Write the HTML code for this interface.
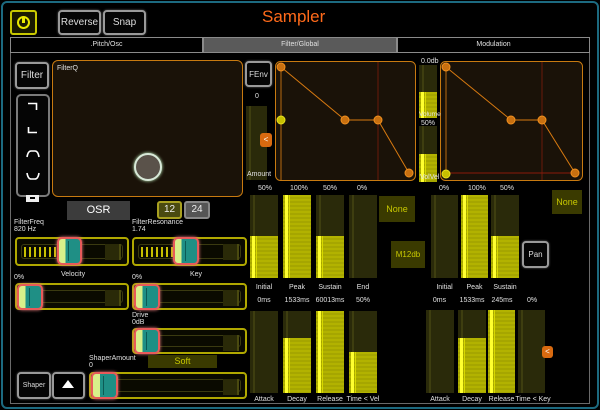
<!DOCTYPE html>
<html><head><meta charset="utf-8"><style>
*{box-sizing:border-box;margin:0;padding:0}
body{width:600px;height:410px;background:#000;position:relative;overflow:hidden;font-family:"Liberation Sans",sans-serif;color:#ddd}
div,span{position:absolute}
.t{font-size:7px;color:#e0e0e0;white-space:nowrap}
.c{text-align:center}
.btn{border:2px solid #9a9a9a;border-radius:4px;background:#050505;color:#ddd;display:flex;align-items:center;justify-content:center;box-shadow:0 0 2px #666}
.bar{background:#2a2a0a;overflow:hidden}
.bar::before{content:"";position:absolute;left:3px;top:0;bottom:0;width:2px;background:#3e3e10}
.fill{left:0;right:0;bottom:0;background:repeating-linear-gradient(#b2b200 0 2px,#a6a600 2px 4px)}
.fill::before{content:"";position:absolute;left:2px;top:0;bottom:0;width:3px;background:#ffff30}
.fill::after{content:"";position:absolute;left:6px;top:0;bottom:0;width:1px;background:#d8d800}
.sl{border:2px solid #b0a800;border-radius:4px;background:#0a0a00}
.sl .tr{left:4px;right:4px;top:5px;bottom:5px;border:1px solid #3a3a10;border-radius:3px}
.sl .ar{right:6px;top:5px;width:16px;height:16px;background:#2a2a08;border-right:2px solid #4a4a10}
.hd{border:2px solid #e85a5a;border-radius:5px;background:linear-gradient(90deg,#d8f08a 0 30%,#1f8f85 30% 100%);box-shadow:0 0 3px #f08080}
.hd::after{content:"";position:absolute;left:45%;top:2px;bottom:2px;width:1px;background:#0c5a55}
.ticks{background:repeating-linear-gradient(90deg,#c8c000 0 2px,transparent 2px 5px);top:8px;height:10px}
</style></head><body>
<div style="left:1px;top:1px;width:598px;height:408px;border:2px solid #1c6a80;border-radius:6px"></div>
<div style="left:10px;top:52px;width:580px;height:352px;border:1px solid #6a6a6a;border-top:none"></div>
<div style="left:10px;top:10px;width:27px;height:25px;border:2px solid #c8c800;border-radius:3px;background:#1a1a00"></div>
<div style="left:17px;top:16px;width:13px;height:13px;border:2px solid #e8e800;border-radius:50%"></div>
<div style="left:22px;top:17px;width:3px;height:6px;background:#e8e800"></div>
<div class="btn" style="left:58px;top:10px;width:43px;height:25px;font-size:10px">Reverse</div>
<div class="btn" style="left:103px;top:10px;width:43px;height:25px;font-size:10px">Snap</div>
<div style="left:262px;top:7px;font-size:17px;color:#ff6a1a">Sampler</div>
<div class="t c" style="left:10px;top:37px;width:193px;height:16px;border:1px solid #8a8a8a;line-height:14px;background:#000">.Pitch/Osc</div>
<div class="t c" style="left:203px;top:37px;width:194px;height:16px;border:1px solid #8a8a8a;line-height:14px;background:#5a5a5a">Filter/Global</div>
<div class="t c" style="left:397px;top:37px;width:193px;height:16px;border:1px solid #8a8a8a;line-height:14px;background:#000">Modulation</div>
<div class="btn" style="left:15px;top:62px;width:34px;height:27px;font-size:10px">Filter</div>
<div style="left:16px;top:94px;width:34px;height:103px;border:2px solid #7a7a7a;border-radius:5px;background:#050505"></div>
<div style="left:52px;top:60px;width:191px;height:137px;border:1px solid #c87a10;border-radius:6px;background:#1a1208"></div>
<div class="t" style="left:57px;top:65px">FilterQ</div>
<div style="left:134px;top:153px;width:28px;height:28px;border:2px solid #d8e8d8;border-radius:50%;background:#5a524a;box-shadow:0 0 3px #cfc"></div>
<div class="btn" style="left:245px;top:61px;width:27px;height:26px;font-size:8px">FEnv</div>
<div class="t" style="left:255px;top:93px">0</div>
<div class="bar" style="left:246px;top:106px;width:21px;height:74px"></div>
<div class="t" style="left:247px;top:171px">Amount</div>
<div style="left:260px;top:133px;width:12px;height:14px;background:#d86a10;border-radius:3px;color:#fff;font-size:8px;text-align:center;line-height:14px">&lt;</div>
<svg style="position:absolute;left:0;top:0" width="600" height="410">
<g fill="none" stroke="#fff" stroke-width="1.6">
<path d="M28 103.5H36.5V110"/>
<path d="M28.5 127V132.5H37"/>
<path d="M27 157Q28 151 31 151H35Q38 151 39 157"/>
<path d="M27 173Q28 179 31 179H35Q38 179 39 173"/>
</g>
<rect x="26" y="195" width="13" height="7" fill="#eee"/>
<rect x="30" y="197" width="5" height="2" fill="#000"/>
<rect x="275.5" y="61.5" width="140" height="119" rx="5" fill="#1a1208" stroke="#c87a10"/>
<line x1="281" y1="67" x2="281" y2="180" stroke="#b86a10"/>
<line x1="378" y1="62" x2="378" y2="180" stroke="#6a1a0a"/>
<polyline points="281,67 345,120 378,120 409,173" fill="none" stroke="#d87a10"/>
<g fill="#c87010" stroke="#f09020"><circle cx="281" cy="67" r="4"/><circle cx="345" cy="120" r="4"/><circle cx="378" cy="120" r="4"/><circle cx="409" cy="173" r="4"/></g>
<circle cx="281" cy="120" r="4" fill="#c8c000" stroke="#e8e020"/>
<rect x="440.5" y="61.5" width="142" height="119" rx="5" fill="#1a1208" stroke="#c87a10"/>
<line x1="446" y1="67" x2="446" y2="174" stroke="#b86a10"/>
<line x1="542" y1="62" x2="542" y2="180" stroke="#6a1a0a"/>
<line x1="446" y1="173" x2="578" y2="173" stroke="#8a1a0a"/>
<polyline points="446,67 511,120 542,120 575,173" fill="none" stroke="#d87a10"/>
<g fill="#c87010" stroke="#f09020"><circle cx="446" cy="67" r="4"/><circle cx="511" cy="120" r="4"/><circle cx="542" cy="120" r="4"/><circle cx="575" cy="173" r="4"/></g>
<circle cx="446" cy="174" r="4" fill="#c8c000" stroke="#e8e020"/>
<polygon points="62,388 74,388 68,380" fill="#fff"/>
</svg>
<div class="t" style="left:421px;top:58px">0.0db</div>
<div class="bar" style="left:419px;top:65px;width:18px;height:53px"><div class="fill" style="height:26px"></div></div>
<div class="t" style="left:419px;top:111px;font-size:6.5px">Volume</div>
<div class="t" style="left:421px;top:120px">50%</div>
<div class="bar" style="left:419px;top:126px;width:18px;height:56px"><div class="fill" style="height:28px"></div></div>
<div class="t" style="left:420px;top:174px">VolVel</div>
<div class="t" style="left:258px;top:185px">50%</div>
<div class="t" style="left:290px;top:185px">100%</div>
<div class="t" style="left:323px;top:185px">50%</div>
<div class="t" style="left:357px;top:185px">0%</div>
<div class="t" style="left:439px;top:185px">0%</div>
<div class="t" style="left:468px;top:185px">100%</div>
<div class="t" style="left:500px;top:185px">50%</div>
<div class="bar" style="left:250px;top:195px;width:28px;height:83px"><div class="fill" style="height:42px"></div></div>
<div class="bar" style="left:283px;top:195px;width:28px;height:83px"><div class="fill" style="height:83px"></div></div>
<div class="bar" style="left:316px;top:195px;width:28px;height:83px"><div class="fill" style="height:42px"></div></div>
<div class="bar" style="left:349px;top:195px;width:28px;height:83px"></div>
<div class="bar" style="left:431px;top:195px;width:27px;height:83px"></div>
<div class="bar" style="left:461px;top:195px;width:27px;height:83px"><div class="fill" style="height:83px"></div></div>
<div class="bar" style="left:491px;top:195px;width:28px;height:83px"><div class="fill" style="height:42px"></div></div>
<div class="c" style="left:379px;top:196px;width:36px;height:26px;background:#3a3a00;color:#c8c800;font-size:9px;line-height:26px">None</div>
<div class="c" style="left:552px;top:190px;width:30px;height:24px;background:#3a3a00;color:#c8c800;font-size:9px;line-height:24px">None</div>
<div class="c" style="left:391px;top:241px;width:34px;height:27px;background:#3a3a00;color:#c8c800;font-size:8px;line-height:27px">M12db</div>
<div class="btn" style="left:522px;top:241px;width:27px;height:27px;font-size:8px">Pan</div>
<div class="t c" style="left:250px;top:284px;width:28px">Initial</div>
<div class="t c" style="left:283px;top:284px;width:28px">Peak</div>
<div class="t c" style="left:316px;top:284px;width:28px">Sustain</div>
<div class="t c" style="left:349px;top:284px;width:28px">End</div>
<div class="t c" style="left:431px;top:284px;width:27px">Initial</div>
<div class="t c" style="left:461px;top:284px;width:27px">Peak</div>
<div class="t c" style="left:491px;top:284px;width:28px">Sustain</div>
<div class="t c" style="left:250px;top:297px;width:28px">0ms</div>
<div class="t c" style="left:281px;top:297px;width:32px">1533ms</div>
<div class="t c" style="left:313px;top:297px;width:34px">60013ms</div>
<div class="t c" style="left:349px;top:297px;width:28px">50%</div>
<div class="t c" style="left:426px;top:297px;width:27px">0ms</div>
<div class="t c" style="left:456px;top:297px;width:32px">1533ms</div>
<div class="t c" style="left:488px;top:297px;width:28px">245ms</div>
<div class="t c" style="left:518px;top:297px;width:28px">0%</div>
<div class="bar" style="left:250px;top:311px;width:28px;height:82px"></div>
<div class="bar" style="left:283px;top:311px;width:28px;height:82px"><div class="fill" style="height:55px"></div></div>
<div class="bar" style="left:316px;top:311px;width:28px;height:82px"><div class="fill" style="height:82px"></div></div>
<div class="bar" style="left:349px;top:311px;width:28px;height:82px"><div class="fill" style="height:41px"></div></div>
<div class="bar" style="left:426px;top:310px;width:28px;height:83px"></div>
<div class="bar" style="left:458px;top:310px;width:28px;height:83px"><div class="fill" style="height:55px"></div></div>
<div class="bar" style="left:488px;top:310px;width:27px;height:83px"><div class="fill" style="height:83px"></div></div>
<div class="bar" style="left:518px;top:310px;width:27px;height:83px"></div>
<div style="left:542px;top:346px;width:11px;height:12px;background:#d86a10;border-radius:3px;color:#fff;font-size:8px;text-align:center;line-height:12px">&lt;</div>
<div class="t c" style="left:250px;top:396px;width:28px">Attack</div>
<div class="t c" style="left:283px;top:396px;width:28px">Decay</div>
<div class="t c" style="left:316px;top:396px;width:28px">Release</div>
<div class="t c" style="left:345px;top:396px;width:36px">Time &lt; Vel</div>
<div class="t c" style="left:426px;top:396px;width:28px">Attack</div>
<div class="t c" style="left:458px;top:396px;width:28px">Decay</div>
<div class="t c" style="left:488px;top:396px;width:27px">Release</div>
<div class="t c" style="left:515px;top:396px;width:36px">Time &lt; Key</div>
<div class="c" style="left:67px;top:201px;width:63px;height:19px;background:#3c3c3c;color:#fff;font-size:11px;line-height:19px">OSR</div>
<div class="c" style="left:157px;top:201px;width:25px;height:18px;background:#4a4a10;border:2px solid #a8a020;border-radius:3px;color:#eee;font-size:10px;line-height:14px">12</div>
<div class="c" style="left:184px;top:201px;width:26px;height:18px;background:#555;border:2px solid #888;border-radius:3px;color:#eee;font-size:10px;line-height:14px">24</div>
<div class="t" style="left:14px;top:219px">FilterFreq<br>820 Hz</div>
<div class="sl" style="left:15px;top:237px;width:114px;height:29px"><div class="tr"></div><div class="ticks" style="left:7px;width:50px"></div><div class="ar"></div></div>
<div class="hd" style="left:57px;top:237px;width:25px;height:28px"></div>
<div class="t" style="left:132px;top:219px">FilterResonance<br>1.74</div>
<div class="sl" style="left:132px;top:237px;width:115px;height:29px"><div class="tr"></div><div class="ticks" style="left:7px;width:50px"></div><div class="ar"></div></div>
<div class="hd" style="left:173px;top:237px;width:26px;height:28px"></div>
<div class="t" style="left:14px;top:274px">0%</div>
<div class="t" style="left:61px;top:271px">Velocity</div>
<div class="t" style="left:132px;top:274px">0%</div>
<div class="t" style="left:190px;top:271px">Key</div>
<div class="sl" style="left:15px;top:283px;width:114px;height:27px"><div class="tr"></div><div class="ar"></div></div>
<div class="hd" style="left:17px;top:284px;width:26px;height:26px"></div>
<div class="sl" style="left:132px;top:283px;width:115px;height:27px"><div class="tr"></div><div class="ar"></div></div>
<div class="hd" style="left:134px;top:284px;width:26px;height:26px"></div>
<div class="t" style="left:132px;top:312px">Drive<br>0dB</div>
<div class="sl" style="left:132px;top:328px;width:115px;height:26px"><div class="tr"></div><div class="ar"></div></div>
<div class="hd" style="left:134px;top:328px;width:26px;height:26px"></div>
<div class="t" style="left:89px;top:355px">ShaperAmount<br>0</div>
<div class="c" style="left:148px;top:355px;width:69px;height:13px;background:#3a3a00;color:#c8c800;font-size:9px;line-height:13px">Soft</div>
<div class="sl" style="left:89px;top:372px;width:158px;height:27px"><div class="tr"></div><div class="ar"></div></div>
<div class="hd" style="left:91px;top:372px;width:27px;height:27px"></div>
<div class="btn" style="left:17px;top:372px;width:34px;height:27px;font-size:7px">Shaper</div>
<div class="btn" style="left:52px;top:372px;width:33px;height:27px;background:transparent"></div>
</body></html>
